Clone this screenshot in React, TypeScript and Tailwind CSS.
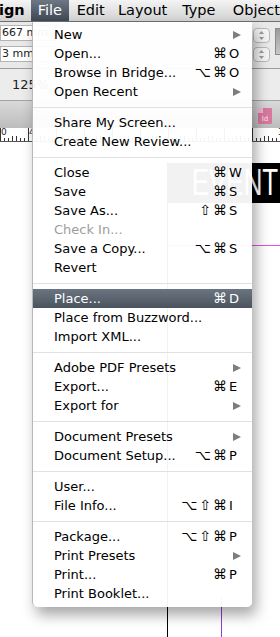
import React from "react";

type Item =
  | { sep: true }
  | { label: string; mods?: string; key?: string; sub?: boolean; disabled?: boolean; active?: boolean };

const items: Item[] = [
  { label: "New", sub: true },
  { label: "Open...", mods: "⌘", key: "O" },
  { label: "Browse in Bridge...", mods: "⌥⌘", key: "O" },
  { label: "Open Recent", sub: true },
  { sep: true },
  { label: "Share My Screen..." },
  { label: "Create New Review..." },
  { sep: true },
  { label: "Close", mods: "⌘", key: "W" },
  { label: "Save", mods: "⌘", key: "S" },
  { label: "Save As...", mods: "⇧⌘", key: "S" },
  { label: "Check In...", disabled: true },
  { label: "Save a Copy...", mods: "⌥⌘", key: "S" },
  { label: "Revert" },
  { sep: true },
  { label: "Place...", mods: "⌘", key: "D", active: true },
  { label: "Place from Buzzword..." },
  { label: "Import XML..." },
  { sep: true },
  { label: "Adobe PDF Presets", sub: true },
  { label: "Export...", mods: "⌘", key: "E" },
  { label: "Export for", sub: true },
  { sep: true },
  { label: "Document Presets", sub: true },
  { label: "Document Setup...", mods: "⌥⌘", key: "P" },
  { sep: true },
  { label: "User..." },
  { label: "File Info...", mods: "⌥⇧⌘", key: "I" },
  { sep: true },
  { label: "Package...", mods: "⌥⇧⌘", key: "P" },
  { label: "Print Presets", sub: true },
  { label: "Print...", mods: "⌘", key: "P" },
  { label: "Print Booklet..." },
];

const font = { fontFamily: '"DejaVu Sans", "Lucida Grande", sans-serif' };

function Arrow({ light }: { light?: boolean }) {
  return (
    <svg width="8" height="8" viewBox="0 0 8 8" className="ml-auto">
      <polygon points="0,0 8,4 0,8" fill={light ? "#ffffff" : "#7d7d7d"} />
    </svg>
  );
}

function Spinner() {
  return (
    <div className="w-[17px] h-[15px] rounded-[4px] border border-[#b9b9b9] bg-[#f4f4f4] flex flex-col items-center justify-center">
      <svg width="5" height="9" viewBox="0 0 5 9">
        <polygon points="2.5,0 5,3 0,3" fill="#9a9a9a" />
        <polygon points="0,6 5,6 2.5,9" fill="#9a9a9a" />
      </svg>
    </div>
  );
}

function Ruler() {
  const ticks = Array.from({ length: 70 });
  return (
    <div className="relative h-[14px] bg-white border-b border-[#555] flex items-end overflow-hidden">
      {ticks.map((_, i) => (
        <div
          key={i}
          className={
            "w-[4px] shrink-0 border-l border-[#333] " +
            (i % 7 === 0 ? "h-[14px]" : i % 7 === 3 || i % 7 === 4 ? "h-[5px]" : "h-[3px]")
          }
        />
      ))}
      <span className="absolute left-[1px] top-0 text-[9px] leading-[9px] text-[#223]" style={font}>0</span>
      <span className="absolute left-[29px] top-0 text-[9px] leading-[9px] text-[#223]" style={font}>4</span>
      <span className="absolute left-[278px] top-0 text-[9px] leading-[9px] text-[#223]" style={font}>3</span>
    </div>
  );
}

export default function App() {
  return (
    <div className="relative w-[280px] h-[637px] overflow-hidden bg-white" style={font}>
      {/* menu bar */}
      <div className="h-[22px] flex items-stretch bg-gradient-to-b from-[#f4f4f4] to-[#d2d2d2] border-b border-[#6f6f6f] text-[14.5px] text-black whitespace-nowrap">
        <div className="w-[33px] flex items-center font-bold -ml-[1px]">ign</div>
        <div className="w-[40px] flex items-center justify-center text-white bg-gradient-to-b from-[#6d7884] to-[#3f4853]">File</div>
        <div className="w-[45px] flex items-center justify-center">Edit</div>
        <div className="w-[63px] flex items-center justify-center">Layout</div>
        <div className="w-[54px] flex items-center justify-center">Type</div>
        <div className="flex items-center pl-[8px]">Object</div>
      </div>

      {/* control panel */}
      <div className="h-[46px] bg-[#e9e9e9] flex">
        <div className="w-[60px] flex flex-col gap-[5px] pt-[3px]">
          <div className="h-[16px] bg-white border border-[#b4b4b4] text-[11px] leading-[14px] pl-[1px] text-[#222]">667 mm</div>
          <div className="h-[16px] bg-white border border-[#b4b4b4] text-[11px] leading-[14px] pl-[1px] text-[#222]">3 mm</div>
        </div>
        <div className="flex-1" />
        <div className="flex gap-[5px] pt-[6px] -mr-[15px]">
          <div className="flex flex-col gap-[4px]">
            <Spinner />
            <Spinner />
          </div>
          <div className="w-[20px] h-[27px] border border-[#8a8a8a] bg-gradient-to-b from-[#9a9a9a] to-[#c8c8c8]" />
        </div>
      </div>

      {/* second row */}
      <div className="h-[32px] bg-[#ececec] border-t border-[#9d9d9d] flex items-center">
        <span className="pl-[12px] text-[13px] text-[#222]">125%</span>
      </div>

      {/* panel tabs row */}
      <div className="h-[28px] bg-gradient-to-b from-[#d9d9d9] to-[#bdbdbd] border-t border-[#a5a5a5] flex items-center justify-end pr-[8px]">
        <div className="relative w-[14px] h-[16px] bg-[#d9789e] rounded-[1px] flex items-end justify-center mt-[3px]">
          <div className="absolute top-0 left-0 w-[5px] h-[5px] bg-[#efb7cc]" />
          <span className="text-[7px] leading-[9px] text-[#fbe3ec]">Id</span>
        </div>
      </div>

      <Ruler />

      {/* canvas */}
      <div className="relative h-[495px] bg-white">
        <div className="absolute left-[167px] top-[20px] w-px h-[475px] bg-black" />
        <div className="absolute left-[221px] top-[455px] w-px h-[60px] bg-[#8f3fd6]" />
        <div className="absolute left-[168px] top-[21px] w-[140px] h-[40px] bg-black flex items-center overflow-hidden">
          <span
            className="text-white text-[36px] leading-none pl-[33px] origin-left scale-x-[0.72]"
            style={{ fontFamily: '"Liberation Sans", Arial, sans-serif' }}
          >
            EVENT
          </span>
        </div>
        <div className="absolute left-[168px] top-[103px] w-[112px] h-px bg-[#e24ee6]" />
      </div>

      {/* File menu */}
      <div className="absolute left-[32px] top-[22px] w-[220px] pt-[3px] pb-[4px] bg-white/95 border-l border-[#b8b8b8] rounded-b-[5px] shadow-[4px_8px_14px_rgba(0,0,0,0.35)] text-[13px] text-black">
        {items.map((it, i) =>
          "sep" in it ? (
            <div key={i} className="h-[12px] flex items-center">
              <div className="w-full h-px bg-[#e1e1e1]" />
            </div>
          ) : (
            <div
              key={i}
              className={
                "h-[19px] flex items-center pl-[21px] pr-[11px] whitespace-nowrap " +
                (it.active ? "bg-gradient-to-b from-[#6b7581] to-[#4b545e] text-white " : "") +
                (it.disabled ? "text-[#9d9d9d]" : "")
              }
            >
              <span>{it.label}</span>
              {it.sub && <Arrow light={it.active} />}
              {it.key && (
                <span className="ml-auto flex items-center leading-[19px]">
                  <span className="text-[14px] tracking-[2px]">{it.mods}</span>
                  <span className="w-[12px]">{it.key}</span>
                </span>
              )}
            </div>
          )
        )}
      </div>
    </div>
  );
}
